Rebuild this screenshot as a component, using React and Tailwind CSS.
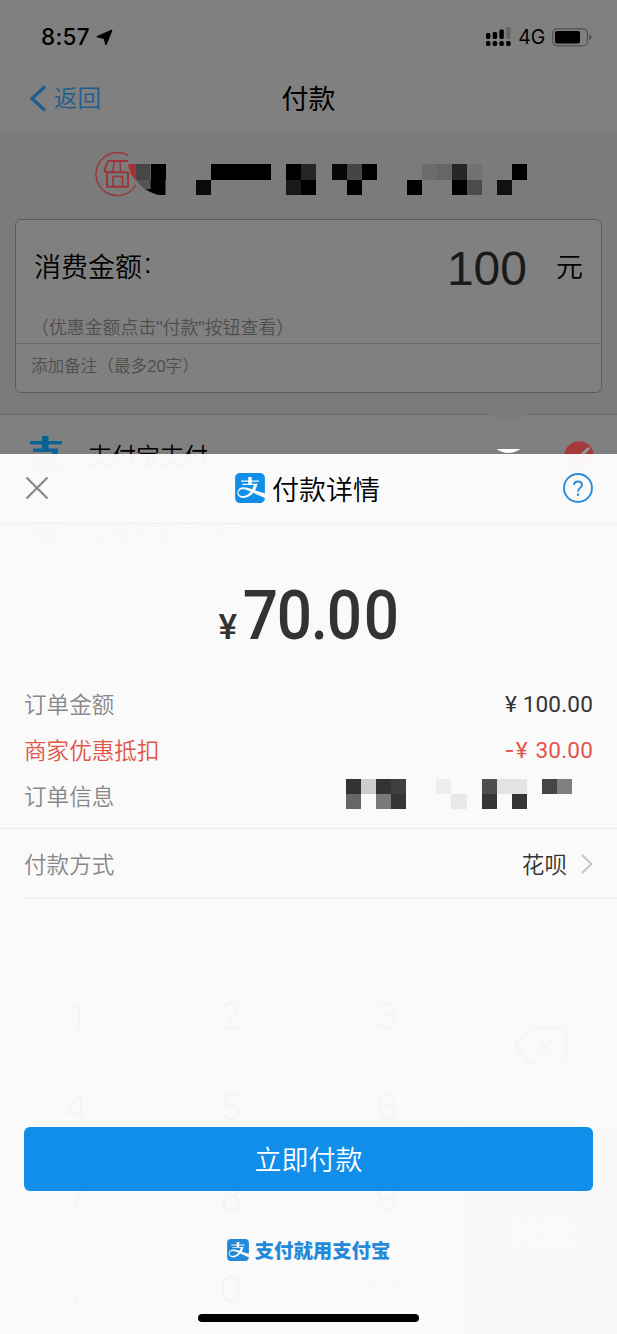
import React from "react";
import { SiAlipay } from "react-icons/si";

const shopMosaic = [
  [1, 0, "#000000"],
  [5, 0, "#000000"],
  [6, 0, "#000000"],
  [7, 0, "#000000"],
  [8, 0, "#000000"],
  [10, 0, "#000000"],
  [11, 0, "#262626"],
  [13, 0, "#060606"],
  [14, 0, "#454545"],
  [15, 0, "#000000"],
  [19, 0, "#6b6b6b"],
  [20, 0, "#666666"],
  [21, 0, "#272727"],
  [22, 0, "#727272"],
  [25, 0, "#000000"],
  [4, 1, "#0a0a0a"],
  [10, 1, "#1a1a1a"],
  [11, 1, "#000000"],
  [14, 1, "#000000"],
  [18, 1, "#000000"],
  [21, 1, "#000000"],
  [22, 1, "#4b4b4b"],
  [24, 1, "#111111"],
];

const orderMosaic = [
  [0, 0, "#333333"],
  [1, 0, "#cdcdcd"],
  [2, 0, "#333333"],
  [3, 0, "#404040"],
  [6, 0, "#ededed"],
  [9, 0, "#4f4f4f"],
  [10, 0, "#e3e3e3"],
  [11, 0, "#e3e3e3"],
  [13, 0, "#464646"],
  [14, 0, "#7f7f7f"],
  [0, 1, "#666666"],
  [2, 1, "#797979"],
  [3, 1, "#353535"],
  [7, 1, "#e8e8e8"],
  [9, 1, "#353535"],
  [11, 1, "#353535"],
];

const Mosaic = ({ cells, cols, className }) => (
  <svg
    className={className}
    viewBox={`0 0 ${cols} 2`}
    preserveAspectRatio="none"
    shapeRendering="crispEdges"
  >
    {cells.map(([x, y, fill]) => (
      <rect key={`${x}-${y}`} x={x} y={y} width="1" height="1" fill={fill} />
    ))}
  </svg>
);

const StatusBar = () => (
  <div className="flex h-[74px] items-center justify-between pl-[41px] pr-[25px]">
    <div className="flex items-center gap-[6px]">
      <span className="font-['Inter'] text-[22.5px] font-[550] leading-none tracking-[0.3px]">
        8:57
      </span>
      <svg width="17" height="17" viewBox="0 0 17 17">
        <path
          d="M15.6 1.4 1.4 7.8 8.3 9.3 10 15.4Z"
          stroke="#000000"
          strokeWidth="1.5"
          strokeLinejoin="round"
        />
      </svg>
    </div>
    <div className="flex items-center gap-[7px]">
      <svg width="25" height="20" viewBox="0 0 25 20">
        <rect x="0" y="6" width="4.4" height="6" rx="1.4" />
        <rect x="6.7" y="5" width="4.4" height="7" rx="1.4" />
        <rect x="13.4" y="2.4" width="4.4" height="9.6" rx="1.4" />
        <rect x="20.2" y="0" width="4.4" height="12" rx="1.2" fill="#666666" />
        <rect x="0" y="14" width="4.4" height="5" rx="1.6" />
        <rect x="6.7" y="14" width="4.4" height="5" rx="1.6" />
        <rect x="13.4" y="14" width="4.4" height="5" rx="1.6" />
        <rect x="20.2" y="14" width="4.4" height="5" rx="1.6" />
      </svg>
      <span className="mt-[2px] font-['Inter'] text-[19.5px] leading-none tracking-[-0.2px]">4G</span>
      <svg width="40" height="19" viewBox="0 0 40 19">
        <rect x=".8" y=".8" width="34.6" height="17" rx="4.5" fill="none" stroke="#505050" strokeWidth="1.2" />
        <rect x="3" y="3" width="25" height="12.4" rx="2" />
        <path d="M37.2 6.2v6q2.3-.8 2.3-3t-2.3-3Z" fill="#505050" />
      </svg>
    </div>
  </div>
);

const NavBar = () => (
  <div className="grid h-[58px] grid-cols-3 items-center border-b border-[#7a7a7a] pb-[9px]">
    <div className="flex items-center gap-[7px] pl-[29px] text-[#205d8e]">
      <svg width="18" height="27" viewBox="0 0 18 27">
        <path d="M16 1.5 3 13.5 16 25.5" fill="none" stroke="currentColor" strokeWidth="3.4" />
      </svg>
      <span className="text-[23.5px] font-[350] leading-none">返回</span>
    </div>
    <h1 className="-mt-[2px] text-center text-[27px] font-normal leading-none">付款</h1>
  </div>
);

const ShopHeader = () => (
  <div className="flex h-[87px] items-start bg-[#7b7b7b] pl-[95px] pt-[18px]">
    <svg className="h-[48px] w-[41px] shrink-0 overflow-visible" viewBox="0 0 41 48">
      <g fill="none" stroke="#9a3638" strokeLinejoin="round">
        <path d="M33.5 5.6A21.5 21.5 0 1 0 41 35" strokeWidth="1.4" />
        <path d="M33 11H13L9.8 19V21Q10.500 22.300 12 22.300H33" strokeWidth="2" />
        <path d="M17.300 21.500 20 11M25.500 21.500 25 11" strokeWidth="1.4" />
        <path d="M12 22.300V36.7H33V22" strokeWidth="2" />
        <path d="M18 36V26.5H27.500V36" strokeWidth="1.7" />
      </g>
      <path d="M33 14H41V31Q34 23.5 33 14Z" fill="#a03538" />
      <path d="M41 14H55.5V30H41Z" fill="#464646" />
      <path d="M41 30H55.5V42Q46 38 41 30Z" fill="#555555" />
      <path d="M55.5 29.5H70.5V45H63Q57 43 50 39.2H55.5Z" />
    </svg>
    <Mosaic cells={shopMosaic} cols={26} className="mt-[14px] h-[31px] w-[391px]" />
  </div>
);

const AmountCard = () => (
  <div className="h-[196px] border-b border-[#6b6b6b] bg-[#7b7b7b] px-[15px]">
    <div className="h-[174px] rounded-[6px] border border-[#5b5b5b] bg-[#808080]">
      <div className="flex h-[93px] items-center justify-between px-[18px] pb-[2px]">
        <div className="flex items-center">
          <span className="text-[27px] font-[350] leading-none">消费金额</span>
          <span className="-mt-[3px] ml-[2px] font-['Liberation_Sans'] text-[27px] leading-none">:</span>
        </div>
        <div className="flex items-center">
          <span className="mt-[6px] font-['Liberation_Sans'] text-[48px] leading-none text-[#1a1a1a]">100</span>
          <span className="ml-[29px] text-[27px] font-[350] leading-none">元</span>
        </div>
      </div>
      <div className="flex h-[31px] items-center border-b border-[#6b6b6b] pl-[15px] font-['Liberation_Sans','Noto_Sans_CJK_SC',sans-serif] text-[17.9px] font-[350] text-[#4e4e4e]">
        （优惠金额点击"付款"按钮查看）
      </div>
      <div className="flex h-[46px] items-center pl-[15px] font-['Liberation_Sans','Noto_Sans_CJK_SC',sans-serif] text-[16.6px] font-[350] text-[#4e4e4e]">
        添加备注（最多20字）
      </div>
    </div>
  </div>
);

const PayMethods = () => (
  <div className="h-[556px]">
    <div className="relative flex h-[78px] items-center pl-[28px] pr-[22px]">
      <svg className="mt-[2px]" width="36" height="38" viewBox="0 0 36 38" fill="#086293">
        <rect x="14" y="0" width="6.5" height="15" />
        <rect x="2" y="5" width="32" height="3.4" />
        <rect x="5" y="12.5" width="25" height="3.4" />
        <path d="M25 15H30.5Q28 22 23.5 27L36 31V37Q27 34 20 30Q14 35 7 34Q0 32 0 26Q2 19 10 20Q15 21 20 24Q23.500 20 25 15ZM16 27Q10 22.500 6 23.500Q2 26 5 30Q10 32 16 27Z" />
      </svg>
      <span className="ml-[24px] mt-[2px] text-[24px] font-[350] leading-none">支付宝支付</span>
      <svg className="ml-auto mt-[3px]" width="32" height="32" viewBox="0 0 32 32">
        <circle cx="16" cy="16" r="14.7" fill="#a43a3c" />
        <path d="m6.5 14.5 6 6L26 8" fill="none" stroke="#999999" strokeWidth="3" />
      </svg>
      <svg className="absolute -top-px left-[489px]" width="40" height="40" viewBox="0 0 40 40">
        <path d="M2 0H38Q36 6 28 6H12Q4 6 2 0Z" fill="#7d7d7d" />
        <path d="M7.5 35H31.5Q19 43 7.500 35Z" fill="#ffffff" />
      </svg>
    </div>
    <div className="flex h-[78px] items-center pl-[25px] text-[#983434]">
      <svg width="44" height="44" viewBox="0 0 44 44" fill="none" stroke="currentColor">
        <circle cx="22" cy="22" r="20.5" strokeWidth="2.5" />
        <path d="M11 12H33M11 32H33M20 12V19H12V25H20V32M24 12V19H32V25H24V32" strokeWidth="3" />
      </svg>
      <span className="ml-[19px] text-[24px] leading-none">工银e支付</span>
      <span className="ml-2 px-1 text-[16px] leading-6">推荐</span>
    </div>
  </div>
);

const Keypad = () => (
  <div className="flex h-[364px] font-['Inter'] text-[37px] font-light text-black">
    <div className="grid w-[465px] grid-cols-[153px_156px_156px] grid-rows-4">
      {["1", "2", "3", "4", "5", "6", "7", "8", "9", ".", "0"].map((key) => (
        <div key={key} className="flex items-center justify-center border-b border-[#757575]">
          {key}
        </div>
      ))}
      <div className="flex items-center justify-center">
        <svg width="40" height="20" viewBox="0 0 40 20" fill="none" stroke="#333333">
          <rect x="1" y="1" width="38" height="18" />
          <path d="M5 6H35M5 10H35M9 15H31" strokeDasharray="3 2" />
        </svg>
      </div>
    </div>
    <div className="flex flex-1 flex-col">
      <div className="flex flex-1 items-center justify-center">
        <svg className="-mt-1" width="54" height="40" viewBox="0 0 54 40" fill="none" stroke="#000000" strokeWidth="2">
          <path d="M18 2H48Q52 2 52 6V34Q52 38 48 38H18L4 24Q0 20 4 16Z" />
          <path d="m24 13 15 14M39 13 24 27" />
        </svg>
      </div>
      <div className="flex h-[211px] items-center justify-center bg-[#747474] font-['Noto_Sans_CJK_SC',sans-serif] text-[32px] text-[#999999]">
        付款
      </div>
    </div>
  </div>
);

const DetailRow = ({ label, red, children }) => (
  <div
    className={`flex h-[46px] items-center justify-between px-6 text-[22.6px] font-[350] ${
      red ? "text-[#e25549]" : "text-[#888888]"
    }`}
  >
    <span>{label}</span>
    {children}
  </div>
);

const PaymentSheet = () => (
  <section className="absolute inset-x-0 bottom-0 flex h-[880px] flex-col bg-white/96">
    {/* Sheet header */}
    <header className="grid h-[70px] shrink-0 grid-cols-[1fr_auto_1fr] items-center border-b border-[#efefef] px-6 pb-px">
      <svg width="26" height="26" viewBox="0 0 26 26">
        <path d="m2.5 2.5 21 21M23.5 2.5l-21 21" stroke="#888888" strokeWidth="2.2" />
      </svg>
      <div className="-ml-[2px] flex items-center gap-[7px]">
        <SiAlipay className="size-[30px] text-[#108ee9]" />
        <h2 className="text-[27px] font-[350] leading-none">付款详情</h2>
      </div>
      <svg className="justify-self-end" width="30" height="30" viewBox="0 0 30 30">
        <circle cx="15" cy="15" r="14" fill="none" stroke="#2b8ad4" strokeWidth="1.9" />
        <path d="M11 12Q11.200 8.500 15 8.500T19 12Q19 13.500 17 15T15 18.700" fill="none" stroke="#2b8ad4" strokeWidth="1.9" />
        <rect x="13.9" y="20.600" width="2.2" height="2.2" fill="#2b8ad4" />
      </svg>
    </header>

    {/* Amount due */}
    <div className="flex h-[157px] shrink-0 items-baseline justify-center pl-[3px] pt-[52px] font-['Roboto'] font-medium leading-[80px] text-[#333333]">
      <span className="text-[35px] leading-none">¥</span>
      <span className="-ml-[3px] -mr-[8px] scale-x-[0.9] text-[69px]">
        <span className="tracking-[-1.4px]">70.</span>
        <span className="tracking-[1.8px]">00</span>
      </span>
    </div>

    {/* Order details */}
    <div className="h-[148px] shrink-0 border-b border-[#eeeeee]">
      <DetailRow label="订单金额">
        <span className="mt-[2px] font-['Roboto'] font-normal tracking-[0.15px] text-[#333333]">¥ 100.00</span>
      </DetailRow>
      <DetailRow label="商家优惠抵扣" red>
        <span className="font-['Roboto'] font-normal tracking-[0.15px] [word-spacing:2px]">
          <span className="mr-px font-['Inter']">-</span>¥ 30.00
        </span>
      </DetailRow>
      <DetailRow label="订单信息">
        <Mosaic cells={orderMosaic} cols={15} className="mr-[21px] -mt-1 h-[30px] w-[226px]" />
      </DetailRow>
    </div>
    <div className="ml-6 flex h-[70px] shrink-0 items-center border-b border-[#eeeeee] pr-6 text-[22.6px] font-[350] text-[#888888]">
      <span>付款方式</span>
      <span className="ml-auto text-[#333333]">花呗</span>
      <svg className="ml-[14px]" width="12" height="20" viewBox="0 0 12 20">
        <path d="m1 1 9.5 9L1 19" fill="none" stroke="#c4c4c4" strokeWidth="1.9" />
      </svg>
    </div>

    <button className="mx-6 mt-[228px] h-[64px] shrink-0 rounded-[6px] bg-[#108ee9] text-[27px] font-[350] text-white">
      立即付款
    </button>

    {/* Brand footer */}
    <footer className="mt-[48px] flex items-center justify-center gap-[6px] text-[#2489d9]">
      <SiAlipay className="size-[22px]" />
      <span className="text-[19.4px] font-black leading-[22px]">支付就用支付宝</span>
    </footer>
    <div className="mx-auto mb-3 mt-auto h-[8px] w-[221px] rounded-full bg-black" />
  </section>
);

export default function App() {
  return (
    <main className="relative h-[1334px] w-[617px] overflow-hidden bg-[#808080] font-['Noto_Sans_CJK_SC',sans-serif] text-black">
      <StatusBar />
      <NavBar />
      <ShopHeader />
      <AmountCard />
      <PayMethods />
      <Keypad />
      <PaymentSheet />
    </main>
  );
}
